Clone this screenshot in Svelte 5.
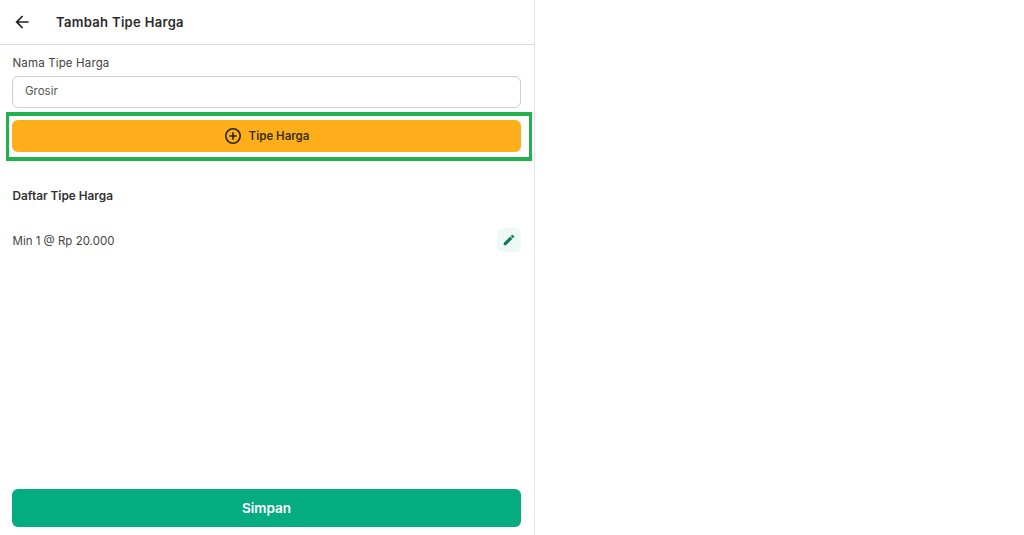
<script>
	let name = $state('Grosir');
	const prices = [{ min: 1, price: '20.000' }];
</script>

<div class="panel">
	<header>
		<button class="back" aria-label="Kembali">
			<svg width="24" height="24" viewBox="0 0 24 24" fill="#1f1f1f">
				<path d="M20 11H7.83l5.59-5.59L12 4l-8 8 8 8 1.41-1.41L7.83 13H20v-2z" transform="translate(12 12) scale(.82) translate(-12 -12)" />
			</svg>
		</button>
		<h1>Tambah Tipe Harga</h1>
	</header>

	<main>
		<label for="nama">Nama Tipe Harga</label>
		<input id="nama" bind:value={name} />

		<div class="highlighted">
			<button class="add">
				<svg width="18" height="18" viewBox="0 0 18 18" fill="none" stroke="#2b2410" stroke-width="1.6">
					<circle cx="9" cy="9" r="7.2" />
					<path d="M9 5.2v7.6M5.2 9h7.6" />
				</svg>
				Tipe Harga
			</button>
			<div class="marker"></div>
		</div>

		<h2>Daftar Tipe Harga</h2>
		{#each prices as p}
			<div class="row">
				<span>Min {p.min} @ Rp {p.price}</span>
				<button class="edit" aria-label="Ubah">
					<svg width="14" height="14" viewBox="0 0 24 24" fill="#0b7a5b">
						<path d="M3 17.25V21h3.75L17.81 9.94l-3.75-3.75L3 17.25zM20.71 7.04a1 1 0 0 0 0-1.41l-2.34-2.34a1 1 0 0 0-1.41 0l-1.83 1.83 3.75 3.75 1.83-1.83z" />
					</svg>
				</button>
			</div>
		{/each}

		<button class="save">Simpan</button>
	</main>
</div>

<style>
	:global(body) {
		background: #fff;
		font-family: 'Inter', 'Open Sans', sans-serif;
		color: #333;
	}

	button {
		font-family: inherit;
		border: 0;
		cursor: pointer;
	}

	.panel {
		width: 534px;
		height: 535px;
		border-right: 1px solid #e4e4e4;
		display: flex;
		flex-direction: column;
	}

	header {
		height: 44px;
		flex: none;
		border-bottom: 1px solid #dcdcdc;
		display: flex;
		align-items: center;
		padding-left: 10px;
		gap: 22px;
	}

	.back {
		background: none;
		padding: 0;
		width: 24px;
		height: 24px;
	}

	h1 {
		margin: 0;
		font-size: 13px;
		font-weight: 600;
		color: #2b2b2b;
		letter-spacing: 0.32px;
	}

	main {
		flex: 1;
		display: flex;
		flex-direction: column;
		padding: 10px 13px 8px 12px;
	}

	label {
		font-size: 11.5px;
		line-height: 16px;
		color: #444;
		letter-spacing: 0.15px;
		margin: 0 0 5px 0.5px;
	}

	input {
		height: 32px;
		box-sizing: border-box;
		border: 1px solid #cfcfcf;
		border-radius: 6px;
		padding: 0 12px 3px;
		font: inherit;
		font-size: 11.5px;
		color: #555;
		outline: none;
	}

	.highlighted {
		position: relative;
		margin-top: 12px;
	}

	.add {
		width: 100%;
		height: 32px;
		border-radius: 6px;
		background: #fdae1a;
		color: #3a3115;
		font-size: 11.5px;
		font-weight: 600;
		display: flex;
		align-items: center;
		justify-content: center;
		gap: 7px;
		padding: 0 0 1px;
	}

	.marker {
		position: absolute;
		left: -6.5px;
		right: -10.5px;
		top: -8px;
		bottom: -8.5px;
		border-style: solid;
		border-color: #22b14c;
		border-width: 4px 3.5px;
		pointer-events: none;
	}

	h2 {
		margin: 36px 0 0 0.5px;
		font-size: 11.8px;
		line-height: 16px;
		font-weight: 600;
		color: #333;
	}

	.row {
		display: flex;
		justify-content: space-between;
		align-items: center;
		margin-top: 24px;
		font-size: 11.5px;
		color: #444;
	}

	.row span {
		padding: 1px 0 0 0.5px;
	}

	.edit {
		width: 24px;
		height: 24px;
		padding: 0;
		border-radius: 6px;
		background: #eef8f5;
		display: flex;
		align-items: center;
		justify-content: center;
	}

	.save {
		margin-top: auto;
		height: 38px;
		flex: none;
		border-radius: 6px;
		background: #05ac7f;
		color: #fff;
		font-size: 13.5px;
		font-weight: 600;
	}
</style>
